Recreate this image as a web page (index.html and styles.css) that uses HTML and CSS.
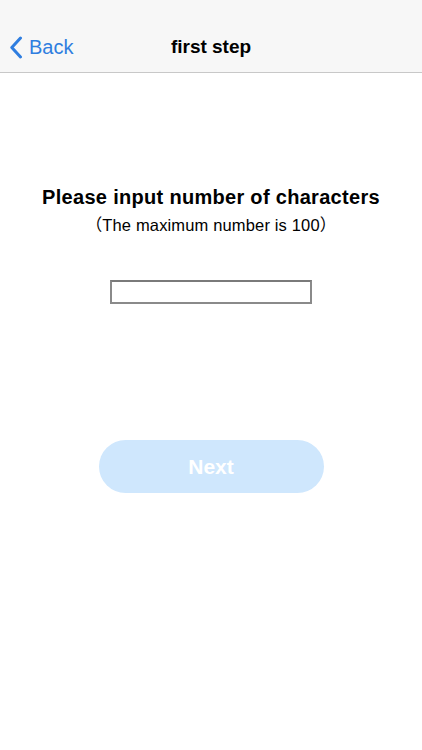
FILE: index.html
```html
<!DOCTYPE html>
<html>
<head>
<meta charset="utf-8">
<link rel="stylesheet" href="styles.css">
</head>
<body>
<header class="navbar">
  <a class="back">
    <svg class="chev" width="14" height="23" viewBox="0 0 14 23"><path d="M11.5 2 L2.8 11.5 L11.5 21" fill="none" stroke="#2f7ee0" stroke-width="3" stroke-linecap="round" stroke-linejoin="round"/></svg>
    <span>Back</span>
  </a>
  <h1 class="title">first step</h1>
</header>
<main class="content">
  <h2 class="heading">Please input number of characters</h2>
  <p class="sub">（The maximum number is 100）</p>
  <input class="field" type="text">
  <button class="next">Next</button>
</main>
</body>
</html>
```
FILE: styles.css
```css
html, body { margin: 0; padding: 0; background: #fff; }
body { font-family: "Liberation Sans", Arial, "Noto Sans CJK JP", sans-serif; color: #000; width: 422px; height: 750px; }
.navbar { height: 73px; background: #f7f7f7; border-bottom: 1px solid #c8c8c8; box-sizing: border-box; position: relative; display: flex; align-items: center; justify-content: center; padding-top: 22px; }
.back { position: absolute; left: 9px; top: 36px; display: flex; align-items: center; gap: 6px; color: #2f7ee0; font-size: 20px; }
.chev { display: block; }
.title { margin: 0; font-size: 19px; font-weight: bold; }
.content { display: flex; flex-direction: column; align-items: center; }
.heading { margin: 112px 0 0; font-size: 20px; letter-spacing: 0.3px; font-weight: bold; line-height: 24px; }
.sub { margin: 6px 0 0; font-size: 16.5px; letter-spacing: 0.15px; line-height: 20px; font-family: "Liberation Sans", "Noto Sans CJK JP", sans-serif; }
.field { margin-top: 45px; width: 202px; height: 24px; box-sizing: border-box; border: 2px solid #8a8a8a; border-top-color: #7a7a7a; background: #fff; padding: 0; outline: none; }
.next { margin-top: 136px; width: 225px; height: 53px; border: none; border-radius: 27px; background: #cfe7fd; color: #fff; font-size: 21px; font-family: "Liberation Sans", Arial, sans-serif; font-weight: bold; }
```
